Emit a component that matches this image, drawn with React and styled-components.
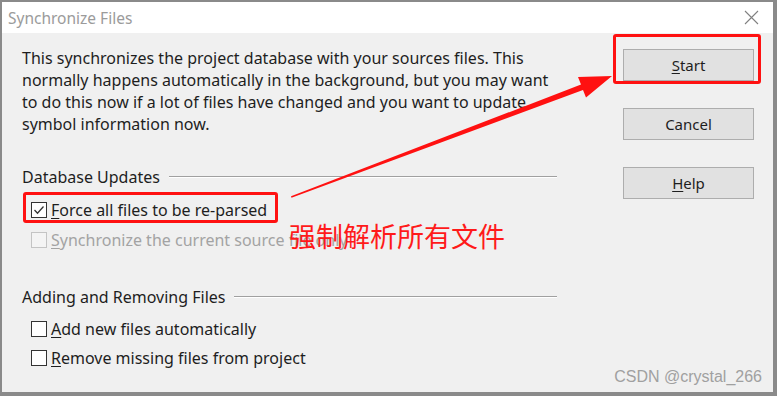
import React from 'react';
import styled, { createGlobalStyle } from 'styled-components';

const GlobalStyle = createGlobalStyle`
  html, body {
    margin: 0;
    padding: 0;
    background: #f0f0f0;
  }
  body {
    font-family: "Noto Sans", "Open Sans", sans-serif;
  }
`;

const Window = styled.div`
  position: relative;
  width: 777px;
  height: 396px;
  box-sizing: border-box;
  border-style: solid;
  border-color: #8a8a8a;
  border-width: 2px 4px 4px 2px;
  background: #f0f0f0;
  display: flex;
  flex-direction: column;
  overflow: hidden;
`;

const TitleBar = styled.div`
  height: 31px;
  flex-shrink: 0;
  background: #fff;
  display: flex;
  align-items: center;
  justify-content: space-between;
  padding: 0 14px 0 6px;
`;

const Title = styled.span`
  font-size: 15.5px;
  color: #9b9b9b;
`;

const Body = styled.div`
  flex: 1;
  display: flex;
  padding: 14px 0 0 20px;
`;

const Main = styled.div`
  width: 535px;
`;

const Side = styled.div`
  margin-left: 66px;
  padding-top: 2px;
  display: flex;
  flex-direction: column;
  gap: 27px;
`;

const Para = styled.p`
  margin: 0;
  font-size: 16px;
  line-height: 22px;
  color: #1e1e1e;
  white-space: nowrap;
`;

const SectionHead = styled.div`
  display: flex;
  align-items: center;
  gap: 9px;
  height: 22px;
  margin-top: ${p => p.$top}px;
  font-size: 16px;
  color: #1e1e1e;
`;

const Rule = styled.div`
  flex: 1;
  border-top: 1px solid #a0a0a0;
  border-bottom: 1px solid #fff;
`;

const Rows = styled.div`
  display: flex;
  flex-direction: column;
  gap: ${p => p.$gap}px;
  margin-top: ${p => p.$top}px;
  padding-left: 9px;
`;

const Row = styled.label`
  display: flex;
  align-items: center;
  gap: 4px;
  height: 22px;
  font-size: 16px;
  color: ${p => (p.$disabled ? '#a3a3a3' : '#1e1e1e')};
`;

const Box = styled.span`
  width: 16px;
  height: 16px;
  box-sizing: border-box;
  border: 1px solid ${p => (p.$disabled ? '#c4c4c4' : '#333')};
  background: ${p => (p.$disabled ? '#f4f4f4' : '#fff')};
  display: flex;
  align-items: center;
  justify-content: center;
`;

const Key = styled.u`
  text-decoration-thickness: 1px;
  text-underline-offset: 2px;
`;

const Button = styled.div`
  width: 131px;
  height: 32px;
  box-sizing: border-box;
  background: #e1e1e1;
  border: 1px solid #adadad;
  display: flex;
  align-items: center;
  justify-content: center;
  font-size: 15px;
  color: #1e1e1e;
`;

const Watermark = styled.div`
  position: absolute;
  right: 11px;
  bottom: 6px;
  font-family: "Liberation Sans", Arial, sans-serif;
  font-size: 16px;
  color: #a0a0a0;
`;

const Annotations = styled.div`
  position: absolute;
  left: -2px;
  top: -2px;
  width: 777px;
  height: 396px;
  pointer-events: none;
`;

const Highlight = styled.div`
  position: absolute;
  left: ${p => p.$x}px;
  top: ${p => p.$y}px;
  width: ${p => p.$w}px;
  height: ${p => p.$h}px;
  box-sizing: border-box;
  border: 3px solid #ff1111;
  border-radius: 3px;
`;

const Note = styled.div`
  position: absolute;
  left: 289px;
  top: 222px;
  font-family: "Noto Sans CJK SC", sans-serif;
  font-size: 27px;
  line-height: 28px;
  color: #ff1a1a;
`;

const Arrow = styled.svg`
  position: absolute;
  left: 0;
  top: 0;
`;

function Check({ checked, disabled }) {
  return (
    <Box $disabled={disabled}>
      {checked && (
        <svg width="12" height="12" viewBox="0 0 12 12">
          <polyline points="1.5,6 4.5,9.2 10.5,2.5" fill="none" stroke="#333" strokeWidth="1.3" />
        </svg>
      )}
    </Box>
  );
}

export default function App() {
  return (
    <>
      <GlobalStyle />
      <Window>
        <TitleBar>
          <Title>Synchronize Files</Title>
          <svg width="15" height="15" viewBox="0 0 15 15">
            <path d="M1 1L14 14M14 1L1 14" stroke="#808080" strokeWidth="1.1" />
          </svg>
        </TitleBar>
        <Body>
          <Main>
            <Para>
              This synchronizes the project database with your sources files. This<br />
              normally happens automatically in the background, but you may want<br />
              to do this now if a lot of files have changed and you want to update<br />
              symbol information now.
            </Para>

            <SectionHead $top={31}>
              Database Updates
              <Rule />
            </SectionHead>
            <Rows $top={11} $gap={8}>
              <Row>
                <Check checked />
                <span><Key>F</Key>orce all files to be re-parsed</span>
              </Row>
              <Row $disabled>
                <Check disabled />
                <span><Key>S</Key>ynchronize the current source file only</span>
              </Row>
            </Rows>

            <SectionHead $top={35}>
              Adding and Removing Files
              <Rule />
            </SectionHead>
            <Rows $top={10} $gap={7}>
              <Row>
                <Check />
                <span><Key>A</Key>dd new files automatically</span>
              </Row>
              <Row>
                <Check />
                <span><Key>R</Key>emove missing files from project</span>
              </Row>
            </Rows>
          </Main>

          <Side>
            <Button><span><Key>S</Key>tart</span></Button>
            <Button>Cancel</Button>
            <Button><span><Key>H</Key>elp</span></Button>
          </Side>
        </Body>

        <Watermark>CSDN @crystal_266</Watermark>

        <Annotations>
          <Highlight $x={613} $y={34} $w={148} $h={50} />
          <Highlight $x={23} $y={192} $w={255} $h={31} />
          <Note>强制解析所有文件</Note>
          <Arrow width="777" height="396" viewBox="0 0 777 396">
            <polygon
              points="291,196.3 291.5,197.7 583,90 586,97.6 612,76 578,77 581,84.5"
              fill="#ff1111"
            />
          </Arrow>
        </Annotations>
      </Window>
    </>
  );
}
